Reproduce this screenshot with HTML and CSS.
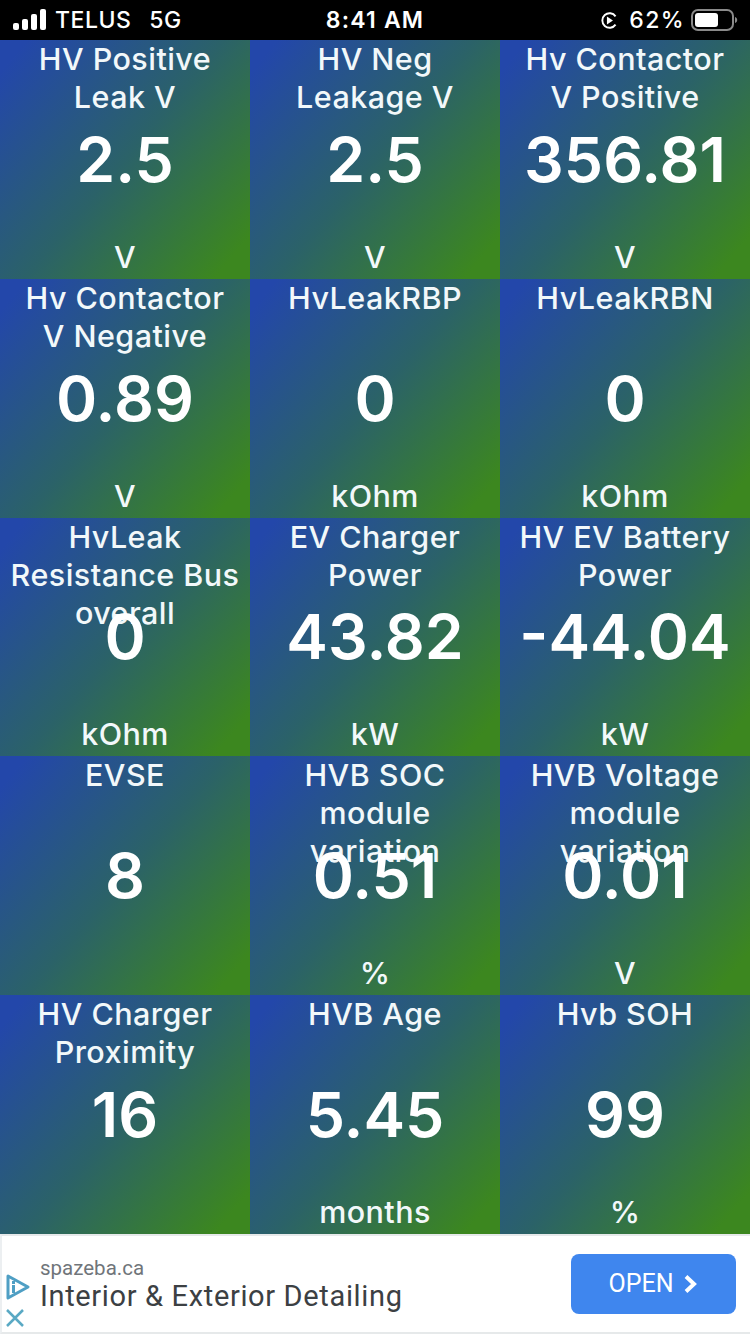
FILE: index.html
```html
<!DOCTYPE html>
<html>
<head>
  <title>Battery Data</title>
  <link rel="stylesheet" href="styles.css">
</head>
<body>
  <div class="status-bar">
    <div class="status-left">
      <svg class="signal" width="34" height="22" viewBox="0 0 34 22">
        <rect x="0" y="14" width="6" height="7" rx="2" fill="#fff"/>
        <rect x="9" y="10" width="6" height="11" rx="2" fill="#fff"/>
        <rect x="18" y="5" width="6" height="16" rx="2" fill="#fff"/>
        <rect x="27" y="0" width="6" height="21" rx="2" fill="#fff"/>
      </svg>
      <span class="carrier">TELUS</span>
      <span class="network">5G</span>
    </div>
    <div class="status-time">8:41 AM</div>
    <div class="status-right">
      <svg class="rotate-lock" width="19" height="19" viewBox="0 0 22 22">
        <path d="M18 6.200A8.400 8.400 0 1 0 18 15.800" fill="none" stroke="#fff" stroke-width="2.200"/>
        <path d="M8 6.500L15 11L8 15.500Z" fill="#fff"/>
      </svg>
      <span class="percent">62%</span>
      <svg class="battery" width="47" height="22" viewBox="0 0 47 22">
        <rect x="1" y="1" width="41" height="20" rx="6" fill="none" stroke="#8a8a8a" stroke-width="2"/>
        <rect x="4" y="4" width="23" height="14" rx="3" fill="#fff"/>
        <path d="M44 8c1.500.5 2.200 1.700 2.200 3s-.7 2.500-2.200 3z" fill="#8a8a8a"/>
      </svg>
    </div>
  </div>

  <div class="grid">
    <div class="cell"><div class="title">HV Positive<br>Leak V</div><div class="value">2.5</div><div class="unit">V</div></div>
    <div class="cell"><div class="title">HV Neg<br>Leakage V</div><div class="value">2.5</div><div class="unit">V</div></div>
    <div class="cell"><div class="title">Hv Contactor<br>V Positive</div><div class="value">356.81</div><div class="unit">V</div></div>

    <div class="cell"><div class="title">Hv Contactor<br>V Negative</div><div class="value">0.89</div><div class="unit">V</div></div>
    <div class="cell"><div class="title">HvLeakRBP</div><div class="value">0</div><div class="unit">kOhm</div></div>
    <div class="cell"><div class="title">HvLeakRBN</div><div class="value">0</div><div class="unit">kOhm</div></div>

    <div class="cell"><div class="title">HvLeak<br>Resistance Bus<br>overall</div><div class="value">0</div><div class="unit">kOhm</div></div>
    <div class="cell"><div class="title">EV Charger<br>Power</div><div class="value">43.82</div><div class="unit">kW</div></div>
    <div class="cell"><div class="title">HV EV Battery<br>Power</div><div class="value">-44.04</div><div class="unit">kW</div></div>

    <div class="cell"><div class="title">EVSE</div><div class="value">8</div><div class="unit"></div></div>
    <div class="cell"><div class="title">HVB SOC<br>module<br>variation</div><div class="value">0.51</div><div class="unit">%</div></div>
    <div class="cell"><div class="title">HVB Voltage<br>module<br>variation</div><div class="value">0.01</div><div class="unit">V</div></div>

    <div class="cell"><div class="title">HV Charger<br>Proximity</div><div class="value">16</div><div class="unit"></div></div>
    <div class="cell"><div class="title">HVB Age</div><div class="value">5.45</div><div class="unit">months</div></div>
    <div class="cell"><div class="title">Hvb SOH</div><div class="value">99</div><div class="unit">%</div></div>
  </div>

  <div class="ad">
    <div class="ad-icons">
      <svg width="26" height="28" viewBox="0 0 26 28">
        <path d="M3 3L23 14L3 25Z" fill="none" stroke="#4f9fc4" stroke-width="3" stroke-linejoin="round"/>
        <rect x="7" y="12" width="3" height="8" fill="#4f9fc4"/>
        <rect x="7" y="8" width="3" height="3" fill="#4f9fc4"/>
      </svg>
      <svg width="20" height="20" viewBox="0 0 20 20">
        <path d="M2 2L18 18M18 2L2 18" fill="none" stroke="#5aa9c4" stroke-width="2.500"/>
      </svg>
    </div>
    <div class="ad-text">
      <div class="ad-domain">spazeba.ca</div>
      <div class="ad-headline">Interior &amp; Exterior Detailing</div>
    </div>
    <div class="ad-button">
      <span>OPEN</span>
      <svg width="16" height="20" viewBox="0 0 16 20">
        <path d="M3 2.500L11 10L3 17.500" fill="none" stroke="#fff" stroke-width="4"/>
      </svg>
    </div>
  </div>
</body>
</html>
```

FILE: styles.css
```css
html, body {
  margin: 0;
  padding: 0;
}

body {
  width: 750px;
  height: 1334px;
  overflow: hidden;
  font-family: Inter, "Liberation Sans", sans-serif;
  color: #fff;
  background-color: #fff;
}

.status-bar {
  height: 40px;
  background-color: #000;
  display: grid;
  grid-template-columns: 1fr auto 1fr;
  align-items: center;
  font-size: 23px;
}

.status-left {
  display: flex;
  align-items: center;
  padding-left: 13px;
}

.signal {
  margin-right: 8px;
}

.carrier {
  margin-right: 18px;
  font-weight: 500;
  letter-spacing: 0.500px;
}

.network {
  font-weight: 500;
  letter-spacing: 0.500px;
}

.status-time {
  font-weight: 600;
  letter-spacing: 1.200px;
}

.status-right {
  display: flex;
  align-items: center;
  justify-content: flex-end;
  padding-right: 12px;
}

.rotate-lock {
  margin-right: 10px;
}

.percent {
  margin-right: 6px;
  font-weight: 500;
  letter-spacing: 1.400px;
}

.grid {
  display: grid;
  grid-template-columns: repeat(3, 250px);
  grid-auto-rows: 238.800px;
}

.cell {
  display: grid;
  overflow: hidden;
  text-align: center;
  background: linear-gradient(130deg, #2347aa 6%, #2b6268 50%, #3c871f 92%);
}

.title, .value, .unit {
  grid-area: 1 / 1;
}

.title {
  align-self: start;
  font-size: 30.500px;
  line-height: 38px;
  font-weight: 550;
  letter-spacing: 0.450px;
  color: #f2f8fa;
}

.value {
  align-self: center;
  font-size: 62.500px;
  line-height: 70px;
  font-weight: 600;
  padding-bottom: 1px;
}

.unit {
  align-self: end;
  font-size: 30.500px;
  line-height: 38px;
  font-weight: 550;
  letter-spacing: 0.450px;
  padding-bottom: 3px;
  color: #f2f8fa;
}

.ad {
  height: 100px;
  box-sizing: border-box;
  background-color: #fff;
  border-left: 2px solid #eceff1;
  border-top: 2px solid #e6e9ea;
  border-bottom: 2px solid #e6e9ea;
  display: flex;
  align-items: center;
  color: #3c4043;
}

.ad-icons {
  width: 38px;
  align-self: flex-end;
  display: flex;
  flex-direction: column;
  align-items: flex-start;
  gap: 7px;
  padding: 0 0 4px 3px;
  box-sizing: border-box;
}

.ad-text {
  flex: 1;
}

.ad-domain {
  font-family: Roboto, sans-serif;
  font-size: 20.500px;
  line-height: 24px;
  color: #70757a;
}

.ad-headline {
  font-family: Roboto, sans-serif;
  font-size: 29px;
  line-height: 32px;
  letter-spacing: 0.650px;
}

.ad-button {
  width: 165px;
  height: 60px;
  margin-right: 14px;
  border-radius: 8px;
  background-color: #3f86ee;
  color: #fff;
  font-family: Roboto, sans-serif;
  font-size: 25px;
  display: flex;
  align-items: center;
  justify-content: center;
  gap: 9px;
}
```
